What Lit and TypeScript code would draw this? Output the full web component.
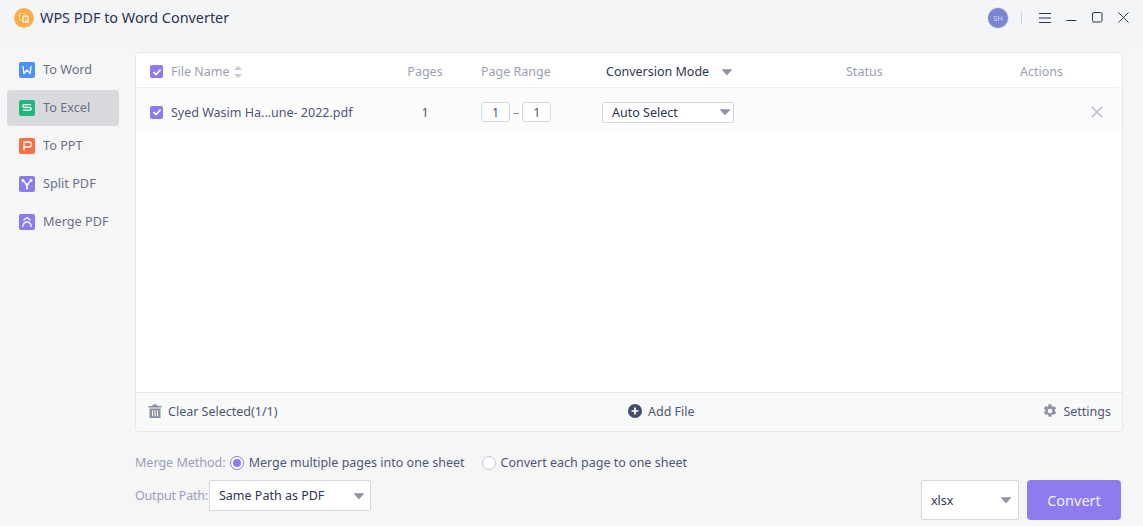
import { LitElement, html, css, svg } from "lit";
import { customElement } from "lit/decorators.js";

const chevron = html`<svg class="tri" viewBox="0 0 14 9" width="12" height="8"><path d="M1.5 1.200h11a.5.5 0 0 1 .4.8L7.400 8a.5.5 0 0 1-.8 0L1.100 2a.5.5 0 0 1 .4-.8z" fill="#8e93a8"/></svg>`;
const check = html`<span class="cb"><svg viewBox="0 0 12 12" width="12" height="12"><path d="M2.400 6l2.600 2.600 4.600-5" fill="none" stroke="#fff" stroke-width="1.700"/></svg></span>`;

const navIcons = [
  svg`<rect width="16" height="16" rx="2" fill="#4c90fb"/><path d="M4 4.200l.9 7.300L8 8l3.100 3.500.9-7.300" fill="none" stroke="#fff" stroke-width="1.300" stroke-linejoin="round"/>`,
  svg`<rect width="16" height="16" rx="2" fill="#1fb77c"/><path d="M12 4.600H5.200A1.300 1.300 0 0 0 3.900 5.900v0a1.300 1.300 0 0 0 1.300 1.400h5.600A1.300 1.300 0 0 1 12.100 8.700v0a1.300 1.300 0 0 1-1.300 1.400H4" fill="none" stroke="#fff" stroke-width="1.300"/>`,
  svg`<rect width="16" height="16" rx="2" fill="#fb6f46"/><path d="M5 12.600V4h5.400a1.800 1.800 0 0 1 1.800 1.800v1.400A1.800 1.800 0 0 1 10.400 9H5" fill="none" stroke="#fff" stroke-width="1.300"/>`,
  svg`<rect width="16" height="16" rx="2" fill="#8b7bf1"/><path d="M8 12.500V9M4.300 4.800L8 9l3.700-4.200" fill="none" stroke="#fff" stroke-width="1.300"/><circle cx="4" cy="4.500" r="1.400" fill="#fff"/><circle cx="12" cy="4.500" r="1.400" fill="#fff"/><circle cx="8" cy="8.800" r="1.500" fill="#fff"/><circle cx="8" cy="12.300" r="1.100" fill="#fff"/>`,
  svg`<rect width="16" height="16" rx="2" fill="#8b7bf1"/><path d="M4.500 6.200L8 3.500l3.500 2.700M3.800 13c0-2.900 1.600-4.600 4.200-5.300 2.600.7 4.200 2.400 4.200 5.300" fill="none" stroke="#fff" stroke-width="1.300"/>`,
];
const navItems = ["To Word", "To Excel", "To PPT", "Split PDF", "Merge PDF"];

@customElement("app-root")
export class AppRoot extends LitElement {
  static styles = css`
    :host {
      display: flex;
      flex-direction: column;
      width: 1143px;
      height: 526px;
      overflow: hidden;
      background: #f6f6f6;
      font-family: "Noto Sans", "Open Sans", sans-serif;
      font-size: 12.5px;
      color: #505673;
    }
    svg { display: block; flex: none; }
    .titlebar {
      height: 44px;
      flex: none;
      display: flex;
      align-items: center;
      background: #f4f5f7;
      padding: 0 14px 9px 14px;
      box-sizing: border-box;
    }
    .app-title { margin-left: 6px; font-size: 14.4px; color: #2a3350; flex: 1; }
    .avatar {
      width: 20px; height: 20px; border-radius: 50%;
      background: #7985d0; box-shadow: 0 0 0 1px #e3e5ee;
      color: #d6daf3; font-size: 7.500px; line-height: 20px; text-align: center;
    }
    .sep { width: 1px; height: 14px; background: #d3d6de; margin: 0 17px 0 13px; }
    .winbtns { display: flex; align-items: center; gap: 15px; }
    .main { display: flex; flex: 1; min-height: 0; }
    .side { width: 135px; flex: none; padding: 8px 16px 0 7px; box-sizing: border-box; display: flex; flex-direction: column; gap: 2px; }
    .nav { height: 36px; padding: 0 0 2px 12px; box-sizing: border-box; border-radius: 4px; display: flex; align-items: center; gap: 8px; color: #6b7088; font-size: 12.700px; }
    .nav svg { margin-top: 2px; }
    .nav.on { background: #d9dadd; }
    .content { flex: 1; display: flex; flex-direction: column; min-width: 0; padding-right: 20px; padding-top: 8px; }
    .panel {
      height: 380px; flex: none; box-sizing: border-box;
      background: #fff; border: 1px solid #e6e7e9; border-radius: 4px;
      display: flex; flex-direction: column;
    }
    .grid {
      display: grid;
      grid-template-columns: 244px 62px 146px 244px 174px 1fr;
      align-items: center;
      box-sizing: border-box;
    }
    .head { height: 35px; color: #9a9fb6; padding: 3px 0 0 14px; border-bottom: 1px solid #eeeff1; margin-right: 3px; }
    .row { height: 44px; background: #fcfcfc; padding: 4px 0 0 14px; }
    .namecell { display: flex; align-items: center; gap: 8px; }
    .cb { width: 13px; height: 13px; background: #8b7bf1; border-radius: 2px; display: flex; align-items: center; justify-content: center; flex: none; }
    .sort { display: flex; flex-direction: column; gap: 4px; margin-left: -4px; }
    .sort i { display: block; width: 0; height: 0; border-left: 4px solid transparent; border-right: 4px solid transparent; }
    .sort i.u { border-bottom: 4px solid #c4c7d3; }
    .sort i.d { border-top: 4px solid #c4c7d3; }
    .center { text-align: center; }
    .pl25 { padding-left: 25px; }
    .range { display: flex; align-items: center; gap: 3px; color: #8a8fa5; }
    .box { width: 29px; height: 20px; box-sizing: border-box; border: 1px solid #d5d7df; border-radius: 3px; background: #fff; color: #505673; display: flex; align-items: center; justify-content: center; }
    .dark { color: #2f3650; }
    .modehead { display: flex; align-items: center; gap: 12px; padding-left: 4px; }
    .sel { box-sizing: border-box; border: 1px solid #d5d7df; background: #fff; border-radius: 2px; display: flex; align-items: center; justify-content: space-between; color: #2f3650; }
    .sel.mode { width: 132px; height: 21px; padding: 0 2px 0 9px; }
    .xcell { grid-column: 6; display: flex; justify-content: flex-end; padding-right: 19px; }
    .spacer { flex: 1; }
    .foot { height: 39px; box-sizing: border-box; flex: none; background: #f8f9f9; border-top: 1px solid #e6e7e9; border-radius: 0 0 4px 4px; display: grid; grid-template-columns: 480px auto 1fr; align-items: center; padding: 0 11px 2px 12px; }
    .act { display: flex; align-items: center; gap: 6px; }
    .act.r { justify-content: flex-end; }
    .lower { display: flex; flex: 1; justify-content: space-between; align-items: flex-start; padding-right: 2px; }
    .opts { display: flex; flex-direction: column; gap: 9px; padding-top: 22px; }
    .line { display: flex; align-items: center; color: #505673; }
    .first { height: 17px; }
    .lab { color: #9a9fb6; margin-right: 4px; }
    .lab.tight { margin-right: 1px; letter-spacing: -0.2px; }
    .radio { width: 14px; height: 14px; box-sizing: border-box; border-radius: 50%; border: 1px solid #c6c9d8; margin-right: 5px; background: #fff; display: flex; align-items: center; justify-content: center; }
    .radio.on { border-color: #8b7bf1; }
    .radio.on::after { content: ""; width: 8px; height: 8px; border-radius: 50%; background: #8b7bf1; }
    .gap { width: 17px; }
    .sel.path { width: 162px; height: 31px; padding: 0 5px 0 9px; }
    .cta { display: flex; gap: 8px; padding-top: 48px; }
    .sel.fmt { width: 98px; height: 40px; padding: 0 6px 0 9px; }
    .btn { width: 94px; height: 40px; border-radius: 4px; background: #8c7cf0; color: #f3f0ff; font-size: 14.500px; display: flex; align-items: center; justify-content: center; }
  `;

  render() {
    return html`
      <div class="titlebar">
        <svg width="20" height="20" viewBox="0 0 20 20">
          <defs><radialGradient id="lg" cx=".5" cy=".5" r=".55"><stop offset="0" stop-color="#fb9a2a"/><stop offset="1" stop-color="#fcb558"/></radialGradient></defs>
          <circle cx="10" cy="10" r="10" fill="url(#lg)"/>
          <rect x="5.500" y="5.500" width="6" height="6.500" rx="1" fill="none" stroke="#ffdcaa" stroke-width="1.100"/>
          <rect x="8" y="7.500" width="7" height="7.500" rx="1" fill="#ffe9cb"/>
          <path d="M10.300 13.500V9.500h2.500v2.300h-2.500" fill="none" stroke="#f59a2a" stroke-width="1"/>
        </svg>
        <span class="app-title">WPS PDF to Word Converter</span>
        <span class="avatar">SH</span>
        <span class="sep"></span>
        <div class="winbtns">
          <svg width="12" height="10" viewBox="0 0 12 10"><path d="M0 .5h12M0 5h12M0 9.500h12" stroke="#2a3350" stroke-width="1"/></svg>
          <svg width="11" height="11" viewBox="0 0 11 11"><path d="M.5 8.500h10" stroke="#2a3350" stroke-width="1"/></svg>
          <svg width="11" height="11" viewBox="0 0 11 11"><rect x=".5" y=".5" width="9.500" height="9.500" rx="1.500" fill="none" stroke="#2a3350"/></svg>
          <svg width="11" height="11" viewBox="0 0 11 11"><path d="M.5.500l10 10M10.500.500l-10 10" stroke="#2a3350" stroke-width="1"/></svg>
        </div>
      </div>
      <div class="main">
        <div class="side">
          ${navItems.map(
            (n, i) => html`<div class="nav ${i === 1 ? "on" : ""}">
              <svg width="16" height="16" viewBox="0 0 16 16">${navIcons[i]}</svg><span>${n}</span>
            </div>`
          )}
        </div>
        <div class="content">
          <div class="panel">
            <div class="grid head">
              <div class="namecell">${check}<span>File Name</span><span class="sort"><i class="u"></i><i class="d"></i></span></div>
              <div class="center">Pages</div>
              <div class="pl25">Page Range</div>
              <div class="modehead dark"><span>Conversion Mode</span>${chevron}</div>
              <div>Status</div>
              <div>Actions</div>
            </div>
            <div class="grid row">
              <div class="namecell">${check}<span>Syed Wasim Ha...une- 2022.pdf</span></div>
              <div class="center">1</div>
              <div class="pl25 range"><span class="box">1</span><span>–</span><span class="box">1</span></div>
              <div class="sel mode"><span>Auto Select</span>${chevron}</div>
              <div class="xcell">
                <svg width="12" height="12" viewBox="0 0 12 12"><path d="M.8.800l10.400 10.400M11.200.800L.8 11.200" stroke="#c3c7d4" stroke-width="1.800"/></svg>
              </div>
            </div>
            <div class="spacer"></div>
            <div class="foot">
              <div class="act">
                <svg width="14" height="14" viewBox="0 0 14 14"><path d="M5 .500h4l.6 1.500h3.900v1.500H.5V2h3.900zM1.500 4.500h11V14h-11z" fill="#8a8fa5"/><path d="M4.500 6.300v6M7 6.300v6M9.500 6.300v6" stroke="#f8f9f9" stroke-width="1.100"/></svg>
                <span>Clear Selected(1/1)</span>
              </div>
              <div class="act">
                <svg width="14" height="14" viewBox="0 0 14 14"><circle cx="7" cy="7" r="7" fill="#454d6b"/><path d="M7 3.500v7M3.500 7h7" stroke="#fff" stroke-width="1.700"/></svg>
                <span>Add File</span>
              </div>
              <div class="act r">
                <svg width="14" height="14" viewBox="0 0 14 14"><path fill-rule="evenodd" fill="#8e93a8" d="M5.600.300h2.800l.4 1.900 1.100.6 1.800-.6 1.400 2.400-1.400 1.300v1.200l1.400 1.300-1.400 2.400-1.800-.6-1.100.6-.4 1.900H5.600l-.4-1.900-1.100-.6-1.800.6L.9 8.400l1.400-1.300V5.900L.9 4.600l1.400-2.400 1.800.6 1.100-.6zM7 4.700a2.300 2.300 0 1 0 0 4.600 2.300 2.300 0 0 0 0-4.600z"/></svg>
                <span>Settings</span>
              </div>
            </div>
          </div>
          <div class="lower">
            <div class="opts">
              <div class="line first"><span class="lab">Merge Method:</span><span class="radio on"></span><span>Merge multiple pages into one sheet</span><span class="gap"></span><span class="radio"></span><span>Convert each page to one sheet</span></div>
              <div class="line"><span class="lab tight">Output Path:</span><div class="sel path"><span>Same Path as PDF</span>${chevron}</div></div>
            </div>
            <div class="cta">
              <div class="sel fmt"><span>xlsx</span>${chevron}</div>
              <div class="btn">Convert</div>
            </div>
          </div>
        </div>
      </div>
    `;
  }
}
